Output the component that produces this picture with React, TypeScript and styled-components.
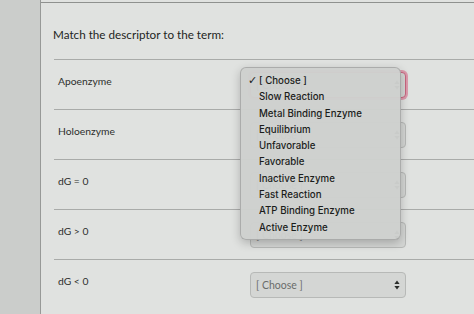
import React from 'react'
import styled, { createGlobalStyle } from 'styled-components'

const GlobalStyle = createGlobalStyle`
  html, body {
    margin: 0;
    padding: 0;
    background: #e0e2e0;
    overflow: hidden;
  }
  body {
    font-family: Lato, 'Open Sans', sans-serif;
    color: #2b2d2b;
  }
`

const Page = styled.div`
  position: relative;
  display: flex;
  width: 474px;
  height: 314px;
  overflow: hidden;
`

const LeftRail = styled.div`
  width: 40px;
  flex: none;
  background: #cbcdcb;
  border-right: 1px solid #979997;
`

const Panel = styled.div`
  flex: 1;
  margin-top: 2px;
  border-top: 1px solid #8f918f;
`

const Title = styled.div`
  padding: 21px 0 0 12px;
  font-size: 11.7px;
  line-height: 20px;
  color: #232523;
  margin-bottom: 15px;
`

const QuestionList = styled.div`
  margin-left: 13px;
`

const Row = styled.div`
  display: grid;
  grid-template-columns: 192px 156px;
  height: 50px;
  box-sizing: border-box;
  padding: 12px 0 0 4px;
  border-top: 1px solid #a9aba9;
`

const Term = styled.div`
  font-size: 10.3px;
  line-height: 18px;
  color: #2d2f2d;
`

const Select = styled.div<{ $focused?: boolean }>`
  position: relative;
  display: flex;
  align-items: center;
  justify-content: space-between;
  height: 26px;
  box-sizing: border-box;
  padding: 0 5px 0 5px;
  background: #d4d6d4;
  border: 1px solid ${({ $focused }) => ($focused ? '#c8657f' : '#b7b9b7')};
  border-radius: 4px;
  box-shadow: ${({ $focused }) => ($focused ? '0 0 0 2px #dc9aac' : 'none')};
  font-size: 10.5px;
  color: #6a6c6a;
`

const Menu = styled.div`
  position: absolute;
  left: 240px;
  top: 67px;
  width: 159px;
  padding: 5px 0 3px;
  background: rgba(206, 209, 206, 0.97);
  border: 0.5px solid rgba(0, 0, 0, 0.18);
  border-radius: 6px;
  box-shadow: 0 3px 10px rgba(0, 0, 0, 0.22);
  font-family: Inter, 'Liberation Sans', sans-serif;
  font-weight: 500;
  font-size: 9.7px;
  color: #1b1d1b;
`

const MenuItem = styled.div`
  position: relative;
  padding-left: 18px;
  height: 16.3px;
  line-height: 16.3px;
  white-space: nowrap;
`

const Check = styled.span`
  position: absolute;
  left: 7px;
  top: 0;
  font-size: 11px;
  font-weight: 700;
  font-family: 'DejaVu Sans', sans-serif;
`

function UpDown() {
  return (
    <svg width="6" height="10" viewBox="0 0 6 10">
      <path d="M3 0.5 L5.6 4 L0.4 4 Z" fill="#2a2c2a" />
      <path d="M3 9.5 L5.6 6 L0.4 6 Z" fill="#2a2c2a" />
    </svg>
  )
}

const terms = ['Apoenzyme', 'Holoenzyme', 'dG = 0', 'dG > 0', 'dG < 0']

const options = [
  '[ Choose ]',
  'Slow Reaction',
  'Metal Binding Enzyme',
  'Equilibrium',
  'Unfavorable',
  'Favorable',
  'Inactive Enzyme',
  'Fast Reaction',
  'ATP Binding Enzyme',
  'Active Enzyme',
]

export default function App() {
  return (
    <>
      <GlobalStyle />
      <Page>
        <LeftRail />
        <Panel>
          <Title>Match the descriptor to the term:</Title>
          <QuestionList>
            {terms.map((t, i) => (
              <Row key={t}>
                <Term>{t}</Term>
                <Select $focused={i === 0}>
                  <span>[ Choose ]</span>
                  <UpDown />
                </Select>
              </Row>
            ))}
          </QuestionList>
        </Panel>
        <Menu>
          {options.map((o, i) => (
            <MenuItem key={o}>
              {i === 0 && <Check>✓</Check>}
              {o}
            </MenuItem>
          ))}
        </Menu>
      </Page>
    </>
  )
}
